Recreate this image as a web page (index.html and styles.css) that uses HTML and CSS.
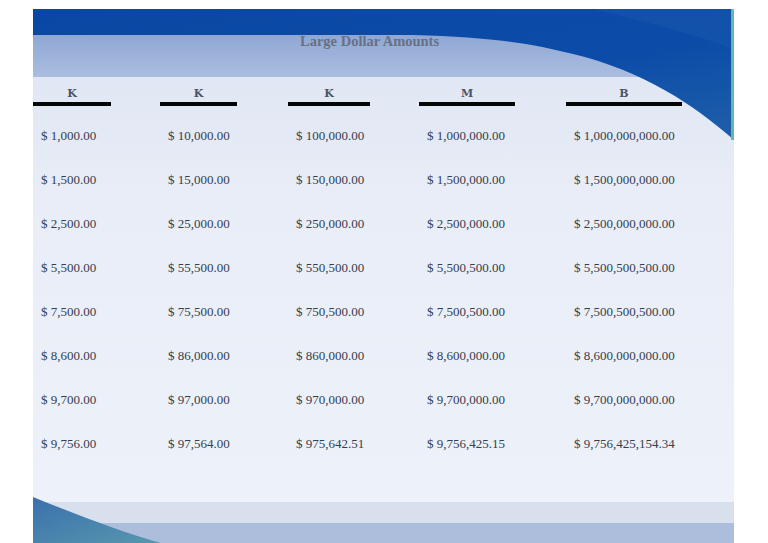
FILE: index.html
```html
<!DOCTYPE html>
<html>
<head>
<meta charset="utf-8">
<link rel="stylesheet" href="styles.css">
</head>
<body>
<div class="slide">
  <svg class="bg" width="701" height="534" viewBox="0 0 701 534" preserveAspectRatio="none">
    <defs>
      <linearGradient id="content" x1="0" y1="0" x2="0" y2="1">
        <stop offset="0" stop-color="#dce3f1"/>
        <stop offset="0.35" stop-color="#e8edf7"/>
        <stop offset="1" stop-color="#eef2fa"/>
      </linearGradient>
      <linearGradient id="band" x1="0" y1="0" x2="0" y2="1">
        <stop offset="0" stop-color="#8fa7d3"/>
        <stop offset="1" stop-color="#abbee0"/>
      </linearGradient>
      <linearGradient id="dark" x1="0" y1="0" x2="1" y2="1">
        <stop offset="0" stop-color="#0a47a4"/>
        <stop offset="0.6" stop-color="#0c4ca8"/>
        <stop offset="1" stop-color="#1f5fa8"/>
      </linearGradient>
      <linearGradient id="swoosh" x1="0" y1="0" x2="1" y2="1">
        <stop offset="0" stop-color="#3a70ad"/>
        <stop offset="1" stop-color="#5897ad"/>
      </linearGradient>
    </defs>
    <rect x="0" y="0" width="701" height="534" fill="url(#content)"/>
    <rect x="0" y="26" width="701" height="42" fill="url(#band)"/>
    <path d="M0 0 H701 V131 C660 95 610 62 540 45 C500 35 460 28 380 26 H0 Z" fill="url(#dark)"/>
    <path d="M560 0 H701 V40 C660 25 610 12 560 0 Z" fill="#1a58ae" opacity="0.5"/>
    <rect x="698" y="0" width="3" height="131" fill="#62b7b1"/>
    <rect x="0" y="493" width="701" height="21" fill="#d8e0ee"/>
    <rect x="0" y="514" width="701" height="20" fill="#adbedd"/>
    <path d="M0 488 C40 504 90 524 128 534 H0 Z" fill="url(#swoosh)"/>
  </svg>

  <div class="content">
    <h1 class="title">Large Dollar Amounts</h1>
    <div class="grid">
      <div class="hd w1"><span class="lbl">K</span><span class="bar"></span></div>
      <div class="hd w2"><span class="lbl">K</span><span class="bar"></span></div>
      <div class="hd w3"><span class="lbl">K</span><span class="bar"></span></div>
      <div class="hd w4"><span class="lbl">M</span><span class="bar"></span></div>
      <div class="hd w5"><span class="lbl">B</span><span class="bar"></span></div>

      <div class="cell">$ 1,000.00</div><div class="cell">$ 10,000.00</div><div class="cell">$ 100,000.00</div><div class="cell">$ 1,000,000.00</div><div class="cell">$ 1,000,000,000.00</div>
      <div class="cell">$ 1,500.00</div><div class="cell">$ 15,000.00</div><div class="cell">$ 150,000.00</div><div class="cell">$ 1,500,000.00</div><div class="cell">$ 1,500,000,000.00</div>
      <div class="cell">$ 2,500.00</div><div class="cell">$ 25,000.00</div><div class="cell">$ 250,000.00</div><div class="cell">$ 2,500,000.00</div><div class="cell">$ 2,500,000,000.00</div>
      <div class="cell">$ 5,500.00</div><div class="cell">$ 55,500.00</div><div class="cell">$ 550,500.00</div><div class="cell">$ 5,500,500.00</div><div class="cell">$ 5,500,500,500.00</div>
      <div class="cell">$ 7,500.00</div><div class="cell">$ 75,500.00</div><div class="cell">$ 750,500.00</div><div class="cell">$ 7,500,500.00</div><div class="cell">$ 7,500,500,500.00</div>
      <div class="cell">$ 8,600.00</div><div class="cell">$ 86,000.00</div><div class="cell">$ 860,000.00</div><div class="cell">$ 8,600,000.00</div><div class="cell">$ 8,600,000,000.00</div>
      <div class="cell">$ 9,700.00</div><div class="cell">$ 97,000.00</div><div class="cell">$ 970,000.00</div><div class="cell">$ 9,700,000.00</div><div class="cell">$ 9,700,000,000.00</div>
      <div class="cell">$ 9,756.00</div><div class="cell">$ 97,564.00</div><div class="cell">$ 975,642.51</div><div class="cell">$ 9,756,425.15</div><div class="cell">$ 9,756,425,154.34</div>
    </div>
  </div>
</div>
</body>
</html>
```
FILE: styles.css
```css
html, body {
  margin: 0;
  padding: 0;
  background: #ffffff;
}
body {
  width: 768px;
  height: 543px;
  overflow: hidden;
}
.slide {
  position: relative;
  margin: 9px 0 0 33px;
  width: 701px;
  height: 534px;
  overflow: hidden;
}
.bg {
  position: absolute;
  left: 0;
  top: 0;
  display: block;
}
.content {
  position: relative;
}
.title {
  margin: 0;
  padding: 24px 0 0 267px;
  font-family: "Liberation Serif", "Times New Roman", serif;
  font-weight: bold;
  font-size: 14.5px;
  line-height: 16px;
  color: #687183;
  white-space: nowrap;
}
.grid {
  display: grid;
  grid-template-columns: 127px 128px 131px 147px 168px;
  margin-top: 39px;
}
.hd {
  display: flex;
  flex-direction: column;
  align-items: center;
  margin-bottom: 8px;
}
.w1 { width: 78px; }
.w2 { width: 77px; }
.w3 { width: 82px; }
.w4 { width: 96px; }
.w5 { width: 116px; }
.lbl {
  font-family: "DejaVu Serif", "Liberation Serif", serif;
  font-weight: bold;
  font-size: 11px;
  line-height: 12px;
  color: #4b5467;
}
.bar {
  display: block;
  align-self: stretch;
  height: 4px;
  margin-top: 2px;
  background: #050505;
}
.cell {
  height: 44px;
  display: flex;
  align-items: center;
  padding-left: 8px;
  font-family: "Liberation Serif", "Times New Roman", serif;
  font-size: 13px;
  color: #363d4c;
  white-space: nowrap;
}
```
